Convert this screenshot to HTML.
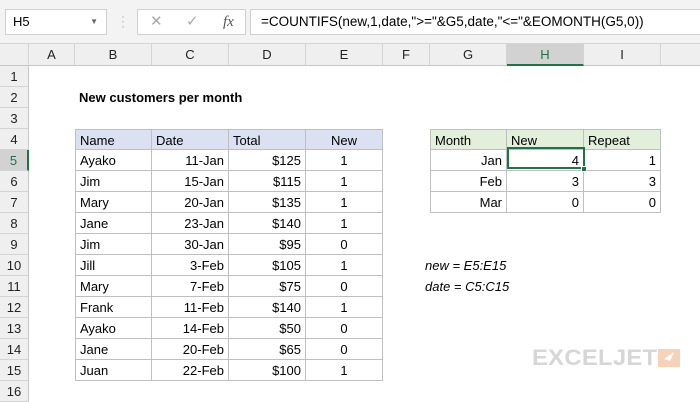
<!DOCTYPE html>
<html><head><style>
*{margin:0;padding:0;box-sizing:border-box}
body{width:700px;height:400px;overflow:hidden;background:#fff;font-family:"Liberation Sans",sans-serif;font-size:13px;color:#000;position:relative}
.top{position:absolute;left:0;top:0;width:700px;height:44px;background:#f3f3f3;border-bottom:1px solid #d4d4d4}
.box{position:absolute;background:#fff;border:1px solid #d0d0d0}
.abs{position:absolute}
.colh{position:absolute;top:44px;height:22px;background:#efefef;border-right:1px solid #d4d4d4;border-bottom:1px solid #c6c6c6;text-align:center;line-height:22px;font-size:13px;color:#222}
.rowh{position:absolute;left:0;width:29px;height:21px;background:#efefef;border-bottom:1px solid #d4d4d4;border-right:1px solid #c6c6c6;text-align:center;line-height:21px;color:#222}
.c{position:absolute;height:21px;line-height:21px;padding:0 4px;border-right:1px solid #bfbfbf;border-bottom:1px solid #bfbfbf;white-space:nowrap}
.r{text-align:right}.m{text-align:center}
</style></head><body>
<div class="top"></div>
<div class="box" style="left:5px;top:9px;width:102px;height:26px;line-height:24px;padding-left:7px">H5<span style="position:absolute;right:8px;top:0;font-size:8px;color:#666">▼</span></div>
<div class="abs" style="left:121px;top:14px;color:#aaa;font-size:12px;line-height:5px">·<br>·<br>·</div>
<div class="box" style="left:137px;top:9px;width:109px;height:26px;color:#aaa;font-size:15px;line-height:24px"><span style="position:absolute;left:12px">✕</span><span style="position:absolute;left:48px">✓</span><span style="position:absolute;left:85px;color:#555;font-style:italic;font-family:'Liberation Serif',serif">fx</span></div>
<div class="box" style="left:250px;top:9px;width:460px;height:26px;line-height:24px;padding-left:10px;font-size:13.5px">=COUNTIFS(new,1,date,"&gt;="&amp;G5,date,"&lt;="&amp;EOMONTH(G5,0))</div>
<div class="colh" style="left:0;width:29px"></div>
<div class="colh" style="left:29px;width:46px">A</div>
<div class="colh" style="left:75px;width:77px">B</div>
<div class="colh" style="left:152px;width:77px">C</div>
<div class="colh" style="left:229px;width:77px">D</div>
<div class="colh" style="left:306px;width:77px">E</div>
<div class="colh" style="left:383px;width:47px">F</div>
<div class="colh" style="left:430px;width:77px">G</div>
<div class="colh" style="left:507px;width:77px;background:#d2d2d2;border-bottom:2px solid #217346;color:#217346">H</div>
<div class="colh" style="left:584px;width:77px">I</div>
<div class="colh" style="left:661px;width:45px"></div>
<div id="rows"></div>
<div class="abs" style="left:79px;top:87px;line-height:21px;font-weight:bold">New customers per month</div>
<div id="t"></div>
<div class="abs" style="left:425px;top:255px;line-height:21px;font-style:italic">new = E5:E15<br>date = C5:C15</div>
<div class="abs" style="left:507px;top:147px;width:78px;height:22px;border:2px solid #217346"></div>
<div class="abs" style="left:581px;top:166px;width:6px;height:6px;background:#217346;border:1px solid #fff"></div>
<div class="abs" style="left:532px;top:346px;font-size:22px;line-height:23px;font-weight:bold;color:#d6d6d6;letter-spacing:0.3px;transform:scaleX(1.08);transform-origin:left">EXCELJET</div>
<div class="abs" style="left:658px;top:349px;width:22px;height:18px;background:#f6d3b8"><svg width="22" height="18"><path d="M16 3 L6 10 L12 12 Z" fill="#fff"/></svg></div>
<script>
let h='';for(let i=1;i<=16;i++){let t=66+(i-1)*21;h+=`<div class="rowh" style="top:${t}px${i==5?';background:#d2d2d2;color:#217346;border-right:2px solid #217346':''}">${i}</div>`}
document.getElementById('rows').innerHTML=h;
const d=[["Name","Date","Total","New"],["Ayako","11-Jan","$125",1],["Jim","15-Jan","$115",1],["Mary","20-Jan","$135",1],["Jane","23-Jan","$140",1],["Jim","30-Jan","$95",0],["Jill","3-Feb","$105",1],["Mary","7-Feb","$75",0],["Frank","11-Feb","$140",1],["Ayako","14-Feb","$50",0],["Jane","20-Feb","$65",0],["Juan","22-Feb","$100",1]];
let s='';const X=[75,152,229,306];
d.forEach((r,i)=>{let t=129+i*21;r.forEach((v,j)=>{let cls=i==0?'':(j==0?'':(j==3?'m':'r'));if(i==0&&j==3)cls='m';
s+=`<div class="c ${cls}" style="left:${X[j]}px;top:${t}px;width:77px;${i==0?'background:#d9e1f2;border-top:1px solid #bfbfbf;':''}${j==0?'border-left:1px solid #bfbfbf;':''}">${v}</div>`})});
const g=[["Month","New","Repeat"],["Jan",4,1],["Feb",3,3],["Mar",0,0]];const GX=[430,507,584];
g.forEach((r,i)=>{let t=129+i*21;r.forEach((v,j)=>{s+=`<div class="c ${i?'r':''}" style="left:${GX[j]}px;top:${t}px;width:77px;${i==0?'background:#e2efda;border-top:1px solid #bfbfbf;':''}${j==0?'border-left:1px solid #bfbfbf;':''}">${v}</div>`})});
document.getElementById('t').innerHTML=s;
</script>
</body></html>
